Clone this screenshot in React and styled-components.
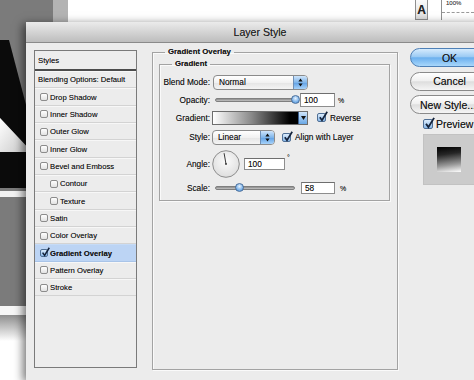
import React from 'react';
import styled, { createGlobalStyle } from 'styled-components';

const GlobalStyle = createGlobalStyle`
  html, body {
    margin: 0;
    padding: 0;
    background: #fff;
  }
  body {
    font-family: 'Liberation Sans', Arial, sans-serif;
    color: #141414;
    text-shadow: 0 0 0.4px rgba(0, 0, 0, 0.45);
  }
`;

const Desktop = styled.div`
  position: relative;
  width: 474px;
  height: 380px;
  overflow: hidden;
  display: flex;
  flex-direction: column;
  background: #fff;
`;

const BackdropSvg = styled.svg`
  position: absolute;
  left: 0;
  top: 0;
`;

const TopStrip = styled.div`
  position: relative;
  height: 22px;
  flex: none;
  display: flex;
  justify-content: flex-end;
`;

const CharPanel = styled.div`
  width: 59px;
  height: 22px;
  display: flex;
  align-items: flex-start;
`;

const CharButton = styled.div`
  width: 13px;
  height: 20px;
  box-sizing: border-box;
  border: 1px solid #8f8f8f;
  border-top: none;
  background: linear-gradient(#fbfbfb, #dcdcdc);
  display: flex;
  align-items: center;
  justify-content: center;
  font: bold 12px 'Liberation Sans', Arial, sans-serif;
  color: #222;
`;

const CharField = styled.div`
  margin-left: 13px;
  flex: 1;
  height: 20px;
  border-left: 1px solid #8f8f8f;
  position: relative;
  font-size: 6px;
  color: #444;
  padding-left: 4px;
  line-height: 6px;
  span {
    display: block;
    height: 12px;
    border-bottom: 1px dashed #9a9a9a;
    margin-left: -4px;
    padding-left: 4px;
  }
`;

/* ---- window ---- */

const Window = styled.div`
  position: relative;
  margin-left: 26px;
  width: 468px;
  flex: 1;
  display: flex;
  flex-direction: column;
  box-shadow: -3px 2px 9px rgba(0, 0, 0, 0.55);
`;

const TitleBar = styled.div`
  height: 21px;
  box-sizing: border-box;
  background: linear-gradient(#ebebeb, #bdbdbd);
  border-bottom: 1px solid #8a8a8a;
  display: flex;
  align-items: center;
  justify-content: center;
  font-size: 10.6px;
  color: #222;
`;

const Body = styled.div`
  flex: 1;
  background: #ececec;
  display: flex;
  align-items: flex-start;
  padding: 4px 0 0 8px;
`;

/* ---- styles list ---- */

const StylesPanel = styled.div`
  margin-top: 3px;
  width: 103px;
  height: 318px;
  box-sizing: border-box;
  border: 1px solid #7a7a7a;
  background: #ededed;
  flex: none;
`;

const PanelHeader = styled.div`
  height: 20px;
  box-sizing: border-box;
  border-bottom: 2px solid #4c4c4c;
  padding-left: 3px;
  display: flex;
  align-items: center;
  font-size: 7.8px;
`;

const StyleRow = styled.div`
  height: 17.35px;
  box-sizing: border-box;
  border-top: 1px solid ${(p) => (p.$active ? '#c6dbf6' : '#f7f7f7')};
  border-bottom: 1px solid ${(p) => (p.$active ? '#a9c4e8' : '#d3d3d3')};
  background: ${(p) => (p.$active ? '#bcd4f4' : '#ececec')};
  padding-left: ${(p) => (p.$sub ? 15 : p.$plain ? 3 : 5)}px;
  display: flex;
  align-items: center;
  gap: 2px;
  font-size: 7.7px;
  font-weight: ${(p) => (p.$active ? 'bold' : 'normal')};
  white-space: nowrap;
`;

/* ---- aqua bits ---- */

const Box = styled.span`
  position: relative;
  flex: none;
  width: ${(p) => p.$size}px;
  height: ${(p) => p.$size}px;
  box-sizing: border-box;
  border: 1px solid ${(p) => (p.$on ? '#4f6f95' : '#8c8c8c')};
  border-radius: 2px;
  background: ${(p) =>
    p.$on ? 'linear-gradient(#dcecfc, #8ab9ea)' : 'linear-gradient(#ffffff, #e2e2e2)'};
  svg {
    position: absolute;
    left: 0;
    top: -3px;
  }
`;

const CheckBox = ({ on, size = 9 }) => (
  <Box $on={on} $size={size}>
    {on && (
      <svg width={size + 1} height={size + 2} viewBox="0 0 10 11">
        <path d="M1.8 6.2 L4 9.3 L9.2 0.8" fill="none" stroke="#14223a" strokeWidth="1.7" />
      </svg>
    )}
  </Box>
);

/* ---- gradient overlay fieldsets ---- */

const Group = styled.fieldset`
  margin: 0 0 0 15px;
  padding: 0;
  width: 246px;
  height: 323px;
  box-sizing: border-box;
  border: 1px solid #a3a3a3;
  box-shadow: inset 1px 1px 0 #fafafa, 1px 1px 0 #fafafa;
  flex: none;
`;

const SubGroup = styled.fieldset`
  margin: 2px 0 0 6px;
  padding: 0;
  width: 231px;
  height: 142px;
  box-sizing: border-box;
  border: 1px solid #a3a3a3;
  box-shadow: inset 1px 1px 0 #fafafa, 1px 1px 0 #fafafa;
`;

const Legend = styled.legend`
  margin-left: 12px;
  padding: 0 3px;
  font-size: 7.8px;
  font-weight: bold;
  line-height: 10px;
`;

const Rows = styled.div`
  padding-top: 4px;
  display: flex;
  flex-direction: column;
`;

const Row = styled.div`
  height: ${(p) => p.$h}px;
  display: flex;
  align-items: center;
  font-size: 8.3px;
`;

const Label = styled.span`
  width: 50px;
  flex: none;
  text-align: right;
  margin-right: ${(p) => p.$gap ?? 3}px;
`;

const Popup = styled.div`
  width: ${(p) => p.$w}px;
  height: 15px;
  box-sizing: border-box;
  border: 1px solid #8b8b8b;
  border-radius: 4px;
  background: linear-gradient(#ffffff, #f1f1f1 50%, #e4e4e4 51%, #f4f4f4);
  display: flex;
  align-items: center;
  overflow: hidden;
  flex: none;
`;

const PopupText = styled.span`
  flex: 1;
  padding-left: 5px;
`;

const PopupCap = styled.span`
  width: 13px;
  height: 100%;
  border-left: 1px solid #6f8fb5;
  background: linear-gradient(#cfe5fb, #7fb5ea 50%, #5e9fe4 51%, #a8d3fa);
  display: flex;
  align-items: center;
  justify-content: center;
`;

const Stepper = () => (
  <svg width="5" height="9" viewBox="0 0 5 9">
    <path d="M2.5 0.5 L4.6 3.4 L0.4 3.4 Z M2.5 8.5 L4.6 5.6 L0.4 5.6 Z" fill="#111" />
  </svg>
);

const SliderWrap = styled.div`
  position: relative;
  width: ${(p) => p.$w}px;
  height: 10px;
  flex: none;
  display: flex;
  align-items: center;
`;

const Track = styled.div`
  margin-left: 2px;
  width: calc(100% - 4px);
  height: 4px;
  box-sizing: border-box;
  border-radius: 2px;
  border: 1px solid #7f7f7f;
  background: linear-gradient(#8a8a8a, #c4c4c4);
`;

const Knob = styled.div`
  position: absolute;
  top: 0;
  width: 9px;
  height: 9px;
  margin-left: -4px;
  border-radius: 50%;
  border: 1px solid #4b6f9b;
  box-sizing: border-box;
  background: radial-gradient(circle at 50% 35%, #e8f3fe, #7cb3ea 60%, #4f8fd6);
`;

const Slider = ({ w, value, min, max }) => (
  <SliderWrap $w={w}>
    <Track />
    <Knob style={{ left: 2 + ((value - min) / (max - min)) * (w - 4) }} />
  </SliderWrap>
);

const Field = styled.div`
  width: ${(p) => p.$w}px;
  height: ${(p) => p.$h ?? 14}px;
  margin-left: ${(p) => p.$ml}px;
  box-sizing: border-box;
  border: 1px solid #8d8d8d;
  border-top-color: #6e6e6e;
  background: #fff;
  padding-left: 3px;
  display: flex;
  align-items: center;
  font-size: 8.3px;
  flex: none;
`;

const Unit = styled.span`
  margin-left: ${(p) => p.$ml}px;
  font-size: 7px;
  align-self: ${(p) => (p.$top ? 'flex-start' : 'center')};
  margin-top: ${(p) => (p.$top ? 6 : 0)}px;
`;

const Swatch = styled.div`
  width: 96px;
  height: 14px;
  flex: none;
  box-sizing: border-box;
  border: 1px solid #6d6d6d;
  display: flex;
`;

const SwatchRamp = styled.div`
  flex: 1;
  background: linear-gradient(to right, #ffffff, #8a8a8a 45%, #000000 90%);
`;

const SwatchCap = styled.div`
  width: 8px;
  border-left: 1px solid #3d5f8d;
  background: linear-gradient(#cfe5fb, #6aa8e6);
  display: flex;
  align-items: center;
  justify-content: center;
`;

const Inline = styled.span`
  display: flex;
  align-items: center;
  margin-left: ${(p) => p.$ml}px;
  gap: ${(p) => p.$gap}px;
  white-space: nowrap;
`;

const Dial = ({ angle }) => {
  const r = (angle * Math.PI) / 180;
  const x = 14 + Math.cos(r) * 11;
  const y = 14 - Math.sin(r) * 11;
  return (
    <svg width="29" height="29" viewBox="0 0 29 29" style={{ flex: 'none' }}>
      <defs>
        <radialGradient id="dialFill" cx="50%" cy="40%" r="60%">
          <stop offset="0" stopColor="#fbfbfb" />
          <stop offset="1" stopColor="#dedede" />
        </radialGradient>
      </defs>
      <circle cx="14" cy="14" r="13.3" fill="url(#dialFill)" stroke="#8e8e8e" strokeWidth="1" />
      <line x1="14" y1="14" x2={x} y2={y} stroke="#3a3a3a" strokeWidth="1" />
      <circle cx="14" cy="14" r="0.9" fill="#333" />
    </svg>
  );
};

/* ---- right column ---- */

const Side = styled.div`
  margin-left: 12px;
  width: 79px;
  flex: none;
  display: flex;
  flex-direction: column;
  padding-top: 1px;
`;

const Button = styled.div`
  height: 19px;
  box-sizing: border-box;
  margin-bottom: 4.5px;
  border-radius: 10px;
  border: 1px solid ${(p) => (p.$primary ? '#4d7fb6' : '#8a8a8a')};
  background: ${(p) =>
    p.$primary
      ? 'linear-gradient(#d6ebfd, #9ccbf4 45%, #6cb0ee 52%, #a9d7fb)'
      : 'linear-gradient(#ffffff, #f0f0f0 45%, #dedede 52%, #f5f5f5)'};
  display: flex;
  align-items: center;
  justify-content: ${(p) => (p.$left ? 'flex-start' : 'center')};
  padding-left: ${(p) => (p.$left ? 9 : 0)}px;
  font-size: 10.5px;
  color: #151515;
  white-space: nowrap;
`;

const PreviewToggle = styled.div`
  margin: -1px 0 0 13px;
  height: 13px;
  display: flex;
  align-items: center;
  gap: 3px;
  font-size: 10.5px;
  white-space: nowrap;
`;

const PreviewWell = styled.div`
  margin: 3px 0 0 13px;
  width: 56px;
  height: 51px;
  box-sizing: border-box;
  background: #cbcbcb;
  border: 1px solid #c2c2c2;
  display: flex;
  align-items: center;
  padding-left: 13px;
`;

const PreviewChip = styled.div`
  width: 24px;
  height: 25px;
  background: linear-gradient(172deg, #000 0%, #262626 30%, #9a9a9a 70%, #fff 100%);
`;

const Backdrop = () => (
  <BackdropSvg width="474" height="380" viewBox="0 0 474 380">
    <defs>
      <linearGradient id="floorShade" x1="0" y1="0" x2="0" y2="1">
        <stop offset="0" stopColor="#8e8e8e" />
        <stop offset="1" stopColor="#ffffff" />
      </linearGradient>
      <linearGradient id="sheen" x1="0" y1="0" x2="1" y2="1">
        <stop offset="0" stopColor="#ffffff" />
        <stop offset="1" stopColor="#bdbdbd" />
      </linearGradient>
    </defs>
    <rect x="0" y="0" width="474" height="380" fill="#fff" />
    <rect x="0" y="0" width="53" height="306" fill="#7b7b7b" />
    <rect x="53" y="0" width="15" height="306" fill="#b3b3b3" />
    <polygon points="0,40 9,40 30,120 30,150 0,118" fill="#0b0b0b" />
    <polygon points="0,118 30,150 30,160 0,152" fill="url(#sheen)" />
    <rect x="0" y="152" width="30" height="36" fill="#0b0b0b" />
    <rect x="0" y="191" width="30" height="6" fill="#f2f2f2" />
    <rect x="0" y="306" width="30" height="9" fill="#f6f6f6" />
    <rect x="0" y="315" width="30" height="26" fill="url(#floorShade)" />
  </BackdropSvg>
);

const styleItems = [
  { label: 'Drop Shadow' },
  { label: 'Inner Shadow' },
  { label: 'Outer Glow' },
  { label: 'Inner Glow' },
  { label: 'Bevel and Emboss' },
  { label: 'Contour', sub: true },
  { label: 'Texture', sub: true },
  { label: 'Satin' },
  { label: 'Color Overlay' },
  { label: 'Gradient Overlay', checked: true, active: true },
  { label: 'Pattern Overlay' },
  { label: 'Stroke' },
];

export default function App() {
  return (
    <Desktop>
      <GlobalStyle />
      <Backdrop />

      <TopStrip>
        <CharPanel>
          <CharButton>A</CharButton>
          <CharField>
            <span>100%</span>
          </CharField>
        </CharPanel>
      </TopStrip>

      <Window>
        <TitleBar>Layer Style</TitleBar>
        <Body>
          <StylesPanel>
            <PanelHeader>Styles</PanelHeader>
            <StyleRow $plain>Blending Options: Default</StyleRow>
            {styleItems.map((item) => (
              <StyleRow key={item.label} $sub={item.sub} $active={item.active}>
                <CheckBox on={item.checked} size={8} />
                {item.label}
              </StyleRow>
            ))}
          </StylesPanel>

          <Group>
            <Legend>Gradient Overlay</Legend>
            <SubGroup>
              <Legend>Gradient</Legend>
              <Rows>
                <Row $h={18}>
                  <Label>Blend Mode:</Label>
                  <Popup $w={95}>
                    <PopupText>Normal</PopupText>
                    <PopupCap>
                      <Stepper />
                    </PopupCap>
                  </Popup>
                </Row>

                <Row $h={18}>
                  <Label>Opacity:</Label>
                  <Slider w={84} value={100} min={0} max={100} />
                  <Field $w={35} $ml={3}>100</Field>
                  <Unit $ml={3}>%</Unit>
                </Row>

                <Row $h={17}>
                  <Label $gap={2}>Gradient:</Label>
                  <Swatch>
                    <SwatchRamp />
                    <SwatchCap>
                      <svg width="5" height="4" viewBox="0 0 5 4">
                        <path d="M0 0 L5 0 L2.5 4 Z" fill="#111" />
                      </svg>
                    </SwatchCap>
                  </Swatch>
                  <Inline $ml={9} $gap={4}>
                    <CheckBox on />
                    Reverse
                  </Inline>
                </Row>

                <Row $h={22}>
                  <Label $gap={2}>Style:</Label>
                  <Popup $w={63}>
                    <PopupText>Linear</PopupText>
                    <PopupCap>
                      <Stepper />
                    </PopupCap>
                  </Popup>
                  <Inline $ml={7} $gap={4}>
                    <CheckBox on />
                    Align with Layer
                  </Inline>
                </Row>

                <Row $h={32}>
                  <Label $gap={2}>Angle:</Label>
                  <Dial angle={100} />
                  <Field $w={41} $h={12} $ml={3}>100</Field>
                  <Unit $ml={2} $top>°</Unit>
                </Row>

                <Row $h={16}>
                  <Label>Scale:</Label>
                  <Slider w={84} value={58} min={10} max={170} />
                  <Field $w={34} $h={12} $ml={4}>58</Field>
                  <Unit $ml={5}>%</Unit>
                </Row>
              </Rows>
            </SubGroup>
          </Group>

          <Side>
            <Button $primary>OK</Button>
            <Button>Cancel</Button>
            <Button $left>New Style...</Button>
            <PreviewToggle>
              <CheckBox on size={10} />
              Preview
            </PreviewToggle>
            <PreviewWell>
              <PreviewChip />
            </PreviewWell>
          </Side>
        </Body>
      </Window>
    </Desktop>
  );
}
